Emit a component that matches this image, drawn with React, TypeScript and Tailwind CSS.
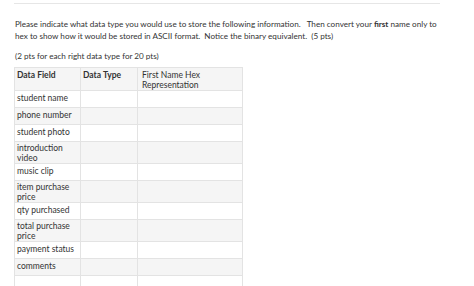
import React from "react";

const rows: { label: string; two?: boolean }[] = [
  { label: "student name" },
  { label: "phone number" },
  { label: "student photo" },
  { label: "introduction video", two: true },
  { label: "music clip" },
  { label: "item purchase price", two: true },
  { label: "qty purchased" },
  { label: "total purchase price", two: true },
  { label: "payment status" },
  { label: "comments" },
  { label: "" },
];

export default function App() {
  return (
    <div
      className="w-[474px] h-[286px] overflow-hidden bg-white text-[#333333] text-[8.5px] leading-[10px]"
      style={{ fontFamily: "Lato, 'Open Sans', sans-serif" }}
    >
      <div className="ml-[14px] mt-[3px] w-[426px] border-t border-[#e6e6e6]" />
      <div className="pl-[15px] pr-[30px] pt-[14px] text-[8.15px]">
        <p className="leading-[12px]">
          Please indicate what data type you would use to store the following information.&nbsp;&nbsp; Then convert your{" "}
          <b>first</b> name only to hex to show how it would be stored in ASCII format.&nbsp; Notice the binary equivalent.&nbsp; (5 pts)
        </p>
        <p className="mt-[8px] leading-[12px]">(2 pts for each right data type for 20 pts)</p>
      </div>
      <div className="ml-[14px] mt-[5px] w-[229px] border border-[#e3e3e3]">
        <div className="grid grid-cols-[66px_57px_1fr] bg-[#f5f5f5] border-b border-[#e3e3e3]">
          <div className="px-[2px] pt-[2px] font-bold border-r border-[#e3e3e3]">Data Field</div>
          <div className="px-[2px] pt-[2px] font-bold border-r border-[#e3e3e3]">Data Type</div>
          <div className="pl-[4px] pr-[2px] pt-[2px]">
            First Name Hex
            <br />
            Representation
          </div>
        </div>
        {rows.map((r, i) => (
          <div
            key={i}
            className={`grid grid-cols-[66px_57px_1fr] border-b border-[#e3e3e3] ${i % 2 === 1 ? "bg-[#f5f5f5]" : "bg-white"}`}
          >
            <div className={`px-[2px] ${r.two ? "pt-[1px] pb-0" : "pt-[2px] pb-[4px]"} border-r border-[#e3e3e3] min-h-[16px]`}>
              {r.label}
            </div>
            <div className="border-r border-[#e3e3e3]" />
            <div />
          </div>
        ))}
      </div>
    </div>
  );
}
